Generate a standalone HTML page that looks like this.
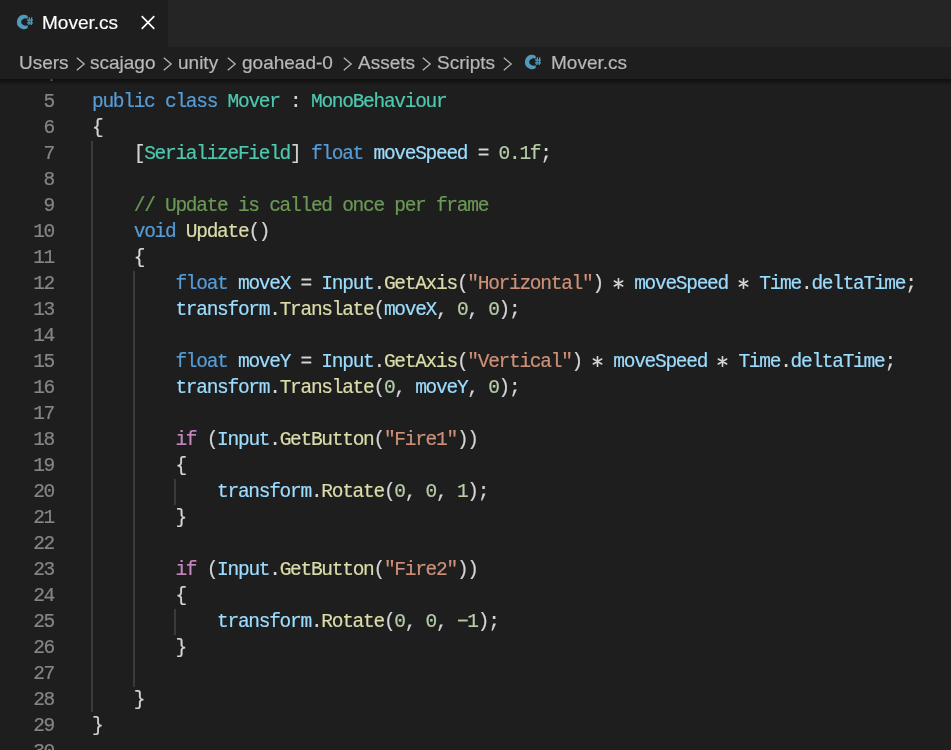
<!DOCTYPE html>
<html><head><meta charset="utf-8">
<style>
html,body{margin:0;padding:0;}
body{width:951px;height:750px;overflow:hidden;background:#1e1e1e;position:relative;font-family:"Liberation Sans",sans-serif;}
#tabbar{position:absolute;left:0;top:0;width:951px;height:47px;background:#252526;}
#tab{position:absolute;left:0;top:0;width:168px;height:47px;background:#1e1e1e;}
#tabtitle{will-change:transform;position:absolute;left:42px;top:11px;font-size:19px;line-height:24px;color:#ffffff;white-space:pre;-webkit-text-stroke:0.15px #fff;}
#close{position:absolute;left:140px;top:15px;}
#crumbs{position:absolute;left:0;top:47px;width:951px;height:32px;background:#1e1e1e;}
.cr{will-change:transform;position:absolute;top:4px;font-size:19px;line-height:24px;color:#b8b8b8;white-space:pre;-webkit-text-stroke:0.2px #b8b8b8;}
.chev{position:absolute;top:9.6px;}
#editor{position:absolute;left:0;top:79px;width:951px;height:671px;overflow:hidden;background:#1e1e1e;}
#shadow{position:absolute;left:0;top:79px;width:951px;height:6px;background:linear-gradient(rgba(0,0,0,0.5),rgba(0,0,0,0));}
.mono{will-change:transform;font-family:"Liberation Mono",monospace;font-size:19.5px;line-height:26px;white-space:pre;letter-spacing:-1.28px;-webkit-text-stroke-width:0.2px;}
#nums{position:absolute;left:0;top:-16px;width:54px;text-align:right;color:#858585;}
#code{position:absolute;left:91.5px;top:-16px;color:#d4d4d4;}
.g{position:absolute;width:2px;background:#3b3b3b;}
.k{color:#569cd6}.t{color:#4ec9b0}.v{color:#9cdcfe}.f{color:#dcdcaa}.s{color:#ce9178}.n{color:#b5cea8}.c{color:#6a9955}.ctl{color:#c586c0}
.ast{position:relative;color:transparent;-webkit-text-stroke-color:transparent;}
.as{position:absolute;left:-0.6px;top:5.0px;}
</style></head><body>
<div id="tabbar"><div id="tab">
<svg style="position:absolute;left:12px;top:10px" width="24" height="24" viewBox="0 0 24 24"><path d="M15.7 6.0A7 7.2 0 1 0 15.7 18.0L15.7 15.2A4.5 3.6 0 1 1 15.7 8.8Z" fill="#519aba"/><path d="M14.9 10.2H21M14.9 12.8H21M17.4 7.3L16.9 15M19.7 7.3L19.2 15" stroke="#1e1e1e" stroke-width="2.4"/><path d="M14.9 10.2H21M14.9 12.8H21M17.4 7.3L16.9 15M19.7 7.3L19.2 15" stroke="#519aba" stroke-width="1.3"/></svg>
<div id="tabtitle">Mover.cs</div>
<svg id="close" width="16" height="16" viewBox="0 0 16 16"><path d="M1.7 1.1L14.3 13.9M14.3 1.1L1.7 13.9" stroke="#ffffff" stroke-width="1.6"/></svg>
</div></div>
<div id="crumbs">
<div class="cr" style="left:18.7px">Users</div>
<div class="cr" style="left:89.9px">scajago</div>
<div class="cr" style="left:178.0px">unity</div>
<div class="cr" style="left:241.8px">goahead-0</div>
<div class="cr" style="left:357.5px">Assets</div>
<div class="cr" style="left:436.6px">Scripts</div>
<div class="cr" style="left:550.7px">Mover.cs</div>
<svg class="chev" style="left:75.5px" width="10" height="16" viewBox="0 0 10 16"><path d="M0.8 0.7L8.2 7L0.8 13.3" fill="none" stroke="#b8b8b8" stroke-width="1.25"/></svg>
<svg class="chev" style="left:163.2px" width="10" height="16" viewBox="0 0 10 16"><path d="M0.8 0.7L8.2 7L0.8 13.3" fill="none" stroke="#b8b8b8" stroke-width="1.25"/></svg>
<svg class="chev" style="left:227.4px" width="10" height="16" viewBox="0 0 10 16"><path d="M0.8 0.7L8.2 7L0.8 13.3" fill="none" stroke="#b8b8b8" stroke-width="1.25"/></svg>
<svg class="chev" style="left:342.6px" width="10" height="16" viewBox="0 0 10 16"><path d="M0.8 0.7L8.2 7L0.8 13.3" fill="none" stroke="#b8b8b8" stroke-width="1.25"/></svg>
<svg class="chev" style="left:422.2px" width="10" height="16" viewBox="0 0 10 16"><path d="M0.8 0.7L8.2 7L0.8 13.3" fill="none" stroke="#b8b8b8" stroke-width="1.25"/></svg>
<svg class="chev" style="left:503.4px" width="10" height="16" viewBox="0 0 10 16"><path d="M0.8 0.7L8.2 7L0.8 13.3" fill="none" stroke="#b8b8b8" stroke-width="1.25"/></svg>
<svg style="position:absolute;left:520px;top:3px" width="24" height="24" viewBox="0 0 24 24"><path d="M15.7 6.0A7 7.2 0 1 0 15.7 18.0L15.7 15.2A4.5 3.6 0 1 1 15.7 8.8Z" fill="#519aba"/><path d="M14.9 10.2H21M14.9 12.8H21M17.4 7.3L16.9 15M19.7 7.3L19.2 15" stroke="#1e1e1e" stroke-width="2.4"/><path d="M14.9 10.2H21M14.9 12.8H21M17.4 7.3L16.9 15M19.7 7.3L19.2 15" stroke="#519aba" stroke-width="1.3"/></svg>
</div>
<div id="editor">
<div id="nums" class="mono">4
5
6
7
8
9
10
11
12
13
14
15
16
17
18
19
20
21
22
23
24
25
26
27
28
29
30</div>
<div class="g" style="left:91px;top:62px;height:571px"></div>
<div class="g" style="left:133px;top:192px;height:416px"></div>
<div class="g" style="left:174px;top:400px;height:26px"></div>
<div class="g" style="left:174px;top:530px;height:26px"></div>
<div id="code" class="mono">
<span class="k">public</span> <span class="k">class</span> <span class="t">Mover</span> : <span class="t">MonoBehaviour</span>
{
    [<span class="t">SerializeField</span>] <span class="k">float</span> <span class="v">moveSpeed</span> = <span class="n">0.1f</span>;

    <span class="c">// Update is called once per frame</span>
    <span class="k">void</span> <span class="f">Update</span>()
    {
        <span class="k">float</span> <span class="v">moveX</span> = <span class="v">Input</span>.<span class="f">GetAxis</span>(<span class="s">"Horizontal"</span>) <span class="ast">*<svg class="as" width="11" height="11" viewBox="0 0 11 11"><path d="M5.5 0.6V10.4M1.3 3.05L9.7 7.95M1.3 7.95L9.7 3.05" stroke="#d4d4d4" stroke-width="1.65" stroke-linecap="round"/></svg></span> <span class="v">moveSpeed</span> <span class="ast">*<svg class="as" width="11" height="11" viewBox="0 0 11 11"><path d="M5.5 0.6V10.4M1.3 3.05L9.7 7.95M1.3 7.95L9.7 3.05" stroke="#d4d4d4" stroke-width="1.65" stroke-linecap="round"/></svg></span> <span class="v">Time</span>.<span class="v">deltaTime</span>;
        <span class="v">transform</span>.<span class="f">Translate</span>(<span class="v">moveX</span>, <span class="n">0</span>, <span class="n">0</span>);

        <span class="k">float</span> <span class="v">moveY</span> = <span class="v">Input</span>.<span class="f">GetAxis</span>(<span class="s">"Vertical"</span>) <span class="ast">*<svg class="as" width="11" height="11" viewBox="0 0 11 11"><path d="M5.5 0.6V10.4M1.3 3.05L9.7 7.95M1.3 7.95L9.7 3.05" stroke="#d4d4d4" stroke-width="1.65" stroke-linecap="round"/></svg></span> <span class="v">moveSpeed</span> <span class="ast">*<svg class="as" width="11" height="11" viewBox="0 0 11 11"><path d="M5.5 0.6V10.4M1.3 3.05L9.7 7.95M1.3 7.95L9.7 3.05" stroke="#d4d4d4" stroke-width="1.65" stroke-linecap="round"/></svg></span> <span class="v">Time</span>.<span class="v">deltaTime</span>;
        <span class="v">transform</span>.<span class="f">Translate</span>(<span class="n">0</span>, <span class="v">moveY</span>, <span class="n">0</span>);

        <span class="ctl">if</span> (<span class="v">Input</span>.<span class="f">GetButton</span>(<span class="s">"Fire1"</span>))
        {
            <span class="v">transform</span>.<span class="f">Rotate</span>(<span class="n">0</span>, <span class="n">0</span>, <span class="n">1</span>);
        }

        <span class="ctl">if</span> (<span class="v">Input</span>.<span class="f">GetButton</span>(<span class="s">"Fire2"</span>))
        {
            <span class="v">transform</span>.<span class="f">Rotate</span>(<span class="n">0</span>, <span class="n">0</span>, <span class="n">&minus;1</span>);
        }

    }
}
</div>
</div>
<div id="shadow"></div>
</body></html>
